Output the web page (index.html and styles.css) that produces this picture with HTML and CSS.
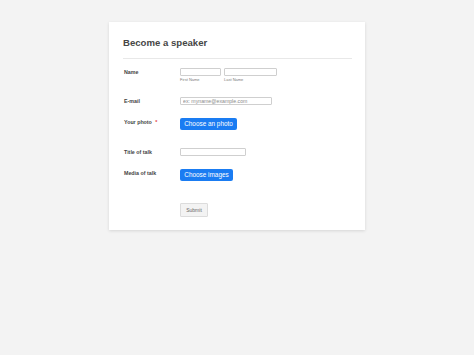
FILE: index.html
```html
<!DOCTYPE html>
<html lang="en">
<head>
<meta charset="utf-8">
<title>Become a speaker</title>
<link rel="stylesheet" href="styles.css">
</head>
<body>
<main class="card">
  <header class="card-header">
    <h1 class="title">Become a speaker</h1>
  </header>
  <form class="form">
    <div class="row row-name">
      <label class="label">Name</label>
      <div class="control name-fields">
        <div class="sub">
          <input class="input input-first" type="text">
          <span class="sublabel">First Name</span>
        </div>
        <div class="sub">
          <input class="input input-last" type="text">
          <span class="sublabel">Last Name</span>
        </div>
      </div>
    </div>
    <div class="row">
      <label class="label">E-mail</label>
      <div class="control">
        <input class="input input-email" type="text" placeholder="ex: myname@example.com">
      </div>
    </div>
    <div class="row row-tall">
      <label class="label">Your photo <span class="req">*</span></label>
      <div class="control">
        <button type="button" class="btn btn-photo">Choose an photo</button>
      </div>
    </div>
    <div class="row">
      <label class="label">Title of talk</label>
      <div class="control">
        <input class="input input-title" type="text">
      </div>
    </div>
    <div class="row row-last">
      <label class="label">Media of talk</label>
      <div class="control">
        <button type="button" class="btn btn-media">Choose images</button>
      </div>
    </div>
    <div class="row row-submit">
      <span class="label"></span>
      <div class="control">
        <button type="button" class="submit">Submit</button>
      </div>
    </div>
  </form>
</main>
</body>
</html>
```
FILE: styles.css
```css
html, body {
  margin: 0;
  padding: 0;
}
body {
  background: #f3f3f3;
  font-family: "Liberation Sans", Arial, sans-serif;
  width: 474px;
  height: 355px;
  overflow: hidden;
}
.card {
  margin: 22px 0 0 109px;
  width: 256px;
  height: 208px;
  box-sizing: border-box;
  background: #fff;
  box-shadow: 0 1px 3px rgba(0, 0, 0, 0.12);
  padding: 0 13px 0 14px;
}
.card-header {
  padding-top: 15px;
  border-bottom: 1px solid #e8e8e8;
  height: 21px;
}
.title {
  margin: 0;
  font-size: 9.6px;
  line-height: 12px;
  font-weight: bold;
  color: #464646;
}
.form {
  padding-top: 9px;
}
.row {
  display: grid;
  grid-template-columns: 57px 1fr;
  padding-bottom: 13px;
}
.row-name { padding-bottom: 15px; }
.row-tall { padding-bottom: 18px; }
.row-last { padding-bottom: 22px; }
.row-submit { padding-bottom: 0; }
.label {
  padding-left: 1px;
  font-size: 5.3px;
  line-height: 8px;
  font-weight: bold;
  color: #444;
}
.req {
  color: #e23c3c;
  margin-left: 2px;
}
.control {
  display: flex;
  align-items: flex-start;
}
.name-fields {
  gap: 3px;
}
.sub {
  display: flex;
  flex-direction: column;
}
.input {
  display: block;
  box-sizing: border-box;
  height: 8px;
  margin: 0;
  padding: 0 2px;
  border: 1px solid #cfcfcf;
  border-radius: 1px;
  background: #fff;
  font-family: inherit;
  font-size: 5.2px;
  outline: none;
}
.input::placeholder {
  color: #8a8a8a;
}
.input-first { width: 41px; }
.input-last { width: 53px; }
.input-email { width: 92px; }
.input-title { width: 66px; }
.sublabel {
  margin-top: 1px;
  font-size: 4px;
  line-height: 5px;
  color: #7a7a7a;
}
.btn {
  box-sizing: border-box;
  height: 12px;
  margin: 0;
  padding: 0;
  border: none;
  border-radius: 2px;
  background: #1a7cf2;
  color: #fff;
  font-family: inherit;
  font-size: 6.4px;
  line-height: 12px;
  text-align: center;
}
.btn-photo { width: 57px; }
.btn-media { width: 53px; }
.submit {
  box-sizing: border-box;
  width: 28px;
  height: 14px;
  margin: 0;
  padding: 0;
  border: 1px solid #dcdcdc;
  border-radius: 1px;
  background: #f3f3f3;
  color: #666;
  font-family: inherit;
  font-size: 5px;
  line-height: 12px;
  text-align: center;
}
```
